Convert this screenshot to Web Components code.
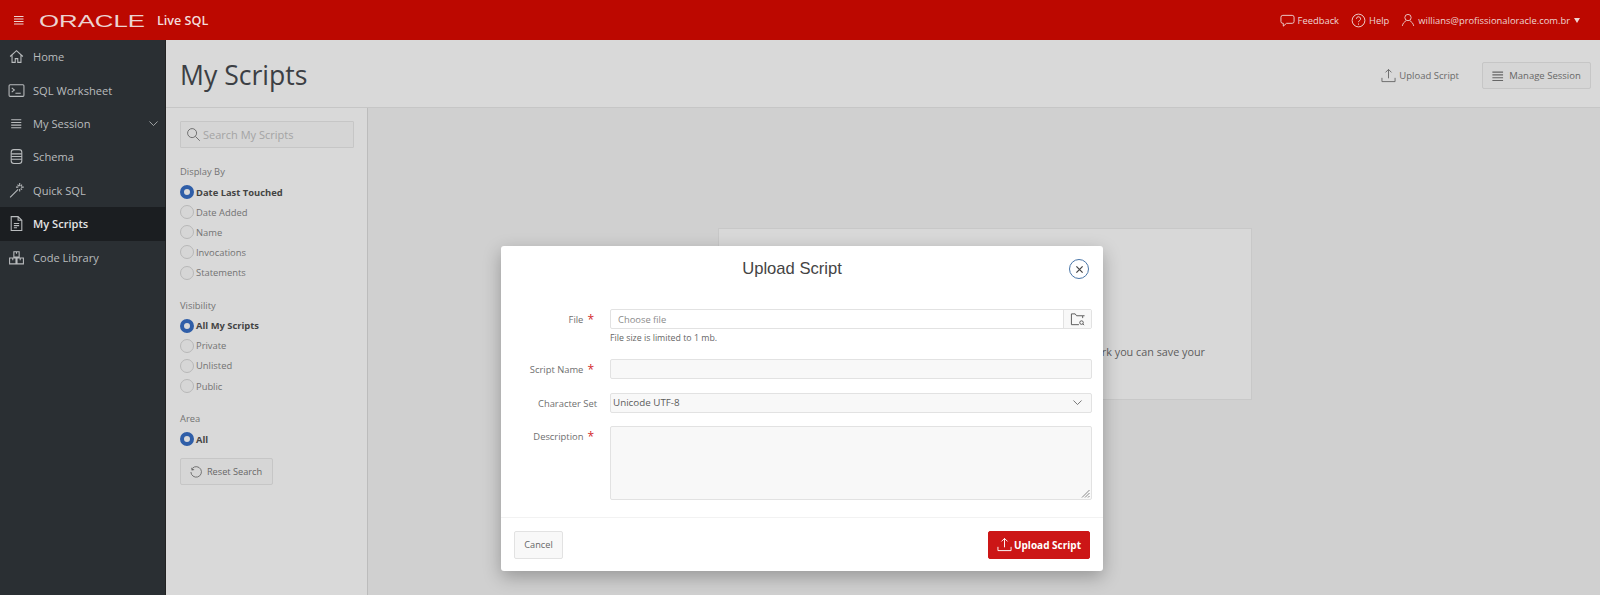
<!DOCTYPE html>
<html lang="en"><head><meta charset="utf-8"><title>My Scripts</title>
<style>
html,body{margin:0;padding:0;height:595px;overflow:hidden;background:#d0d0d0}
body{font-family:"Open Sans",sans-serif;font-size:11px;color:#555}
#root{display:flex;flex-direction:column;height:595px;position:relative}
#mid{display:flex;flex:1;min-height:0}
#work{flex:1;display:flex;flex-direction:column;min-width:0}
#below{flex:1;display:flex;min-height:0}
</style></head><body>
<div id="root">
  <app-header></app-header>
  <div id="mid">
    <side-nav>
      <nav-item icon="home">Home</nav-item>
      <nav-item icon="term">SQL Worksheet</nav-item>
      <nav-item icon="lines" chevron>My Session</nav-item>
      <nav-item icon="db">Schema</nav-item>
      <nav-item icon="wand">Quick SQL</nav-item>
      <nav-item icon="doc" active>My Scripts</nav-item>
      <nav-item icon="blocks">Code Library</nav-item>
    </side-nav>
    <div id="work">
      <title-band></title-band>
      <div id="below">
        <filter-panel></filter-panel>
        <empty-area></empty-area>
      </div>
    </div>
  </div>
  <upload-dialog></upload-dialog>
</div>
<script>
const ICONS={
home:'<path d="M2 8 8 2.500 14 8M3.800 6.500V13.500h3v-3.500h2.400v3.500h3V6.500"/>',
term:'<rect x="1" y="2.5" width="14" height="11" rx="1"/><path d="M3.5 5.5 6 7.5 3.5 9.5M7 10.5h5"/>',
lines:'<path d="M3 4.500h9.500M3 7h9.500M3 9.500h9.500M3 12h9.500"/>',
db:'<rect x="3" y="1.5" width="10" height="13" rx="2.5"/><path d="M3 5.5h10M3 8h10M3 10.5h10"/>',
wand:'<path d="M2 14.5 9.5 7M11 1v3M11 6.5v2.5M7.5 4.8h2.2M12.3 4.8h2.5M9 2.5l1.2 1.3M13.2 2.5 12 3.8M12 6l1.2 1.3"/>',
doc:'<path d="M3 1.5h6.5l3.5 3.5v9.5H3zM9.5 1.5V5H13M5.5 8h5M5.5 10h5M5.5 12h3"/>',
blocks:'<path d="M5.5 2.5h5v5h-5zM1.5 8.5h6v5.5h-6zM8.5 8.5h6v5.5h-6zM8 2.5v2M4.500 8.5v2M11.5 8.5v2"/>',
chev:'<path d="M3 5.5 8 10.5 13 5.5"/>',
search:'<circle cx="6.5" cy="6.5" r="4.8"/><path d="M10 10l4.7 4.7"/>',
reset:'<path d="M4 3.6A6 6 0 1 1 2.2 8"/><path d="M2.5 2.8 3 6.3 6.3 5.6z" fill="currentColor" stroke="none"/>',
upload:'<path d="M8 11V1.5M4.8 4.7 8 1.5l3.2 3.2M1 10.5v4h14v-4"/>',
chat:'<path d="M3 2.5h10a2 2 0 0 1 2 2v4.500a2 2 0 0 1-2 2H7l-3.500 3v-3H3a2 2 0 0 1-2-2V4.500a2 2 0 0 1 2-2z"/>',
help:'<circle cx="8" cy="8" r="6.8"/><path d="M5.800 6.200a2.200 2.200 0 1 1 3.300 1.900C8.300 8.600 8 9 8 9.800"/><path d="M8 11.200v1.300"/>',
user:'<circle cx="8" cy="5.200" r="3.600"/><path d="M1.500 14.800c.6-3 2.500-5 4.500-6M14.500 14.800c-.6-3-2.500-5-4.500-6"/>',
folder:'<path d="M13.500 6.500V4H7L5.500 2H1.500v11.500h8M13.500 4h2"/><circle cx="12.300" cy="11.300" r="1.900"/><path d="M13.700 12.700 15 14"/>',
x:'<path d="M3.500 3.500l9 9M12.500 3.500l-9 9"/>'
};
class IconGlyph extends HTMLElement{
  connectedCallback(){
    const s=this.getAttribute('size')||16,w=this.getAttribute('weight')||1;
    this.attachShadow({mode:'open'}).innerHTML=`<style>:host{display:inline-flex;flex:none;width:${s}px;height:${s}px}svg{display:block}</style>
    <svg width="${s}" height="${s}" viewBox="0 0 16 16" fill="none" stroke="currentColor" stroke-width="${w}">${ICONS[this.getAttribute('name')]}</svg>`;
  }
}
customElements.define('icon-glyph',IconGlyph);

class AppHeader extends HTMLElement{
  connectedCallback(){
    this.attachShadow({mode:'open'}).innerHTML=`<style>
    :host{display:flex;align-items:center;height:40px;flex:none;background:#bc0800;color:#eed5d3;padding:0 20px 0 11px;box-sizing:border-box;font:9.400px "Open Sans",sans-serif}
    svg.logo{display:block;margin-left:12px;overflow:visible}
    .app{margin-left:11px;font-size:12.600px;font-weight:600;color:#f3dcdb}
    .sp{flex:1}
    .lnk{display:flex;align-items:center;gap:3px;margin-left:12px}
    .caret{width:0;height:0;border:3.500px solid transparent;border-top:5px solid #eed5d3;border-bottom:0;margin-left:1px}
    </style>
    <icon-glyph name="lines" size="16"></icon-glyph>
    <svg class="logo" width="107" height="20" viewBox="0 0 107 20"><text x="0" y="16.500" font-family="Liberation Sans" font-size="17" textLength="106" lengthAdjust="spacingAndGlyphs" fill="#ecd3d1">ORACLE</text></svg>
    <span class="app">Live SQL</span><span class="sp"></span>
    <span class="lnk"><icon-glyph name="chat" size="15"></icon-glyph>Feedback</span>
    <span class="lnk"><icon-glyph name="help" size="15"></icon-glyph>Help</span>
    <span class="lnk"><icon-glyph name="user" size="14"></icon-glyph>willians@profissionaloracle.com.br<i class="caret"></i></span>`;
  }
}
customElements.define('app-header',AppHeader);

class SideNav extends HTMLElement{
  constructor(){super();this.attachShadow({mode:'open'}).innerHTML=`<style>:host{display:block;width:166px;flex:none;background:#2a2f33;box-shadow:inset -1px 0 0 #222}</style><slot></slot>`;}
}
customElements.define('side-nav',SideNav);

class NavItem extends HTMLElement{
  connectedCallback(){
    const a=this.hasAttribute('active');
    this.attachShadow({mode:'open'}).innerHTML=`<style>
    :host{display:flex;align-items:center;height:33.430px;box-sizing:border-box;padding:0 6px 0 8px;gap:8px;font:11.100px "Open Sans",sans-serif;color:${a?'#e4e4e4':'#b9bcbe'};font-weight:${a?600:400};background:${a?'#1b1e21':'transparent'}}
    span{flex:1}icon-glyph{color:#b9bcbe}
    </style><icon-glyph name="${this.getAttribute('icon')}" size="17"></icon-glyph><span><slot></slot></span>${this.hasAttribute('chevron')?'<icon-glyph name="chev" size="13"></icon-glyph>':''}`;
  }
}
customElements.define('nav-item',NavItem);

class TitleBand extends HTMLElement{
  connectedCallback(){
    this.attachShadow({mode:'open'}).innerHTML=`<style>
    :host{display:flex;align-items:center;height:68px;box-sizing:border-box;flex:none;background:#d9d9d9;border-bottom:1px solid #c6c6c6;padding:4px 9px 0 14px;font:9.500px "Open Sans",sans-serif;color:#6a6a6a}
    h1{margin:0;font-size:26.600px;font-weight:500;color:#3c3f44;flex:1;line-height:1}
    .up{display:flex;align-items:center;gap:3px;margin-right:23px}
    </style><h1>My Scripts</h1>
    <span class="up"><icon-glyph name="upload" size="15"></icon-glyph>Upload Script</span>
    <app-button icon="lines" isize="18" gap="2" w="109" style="padding-right:3px">Manage Session</app-button>`;
  }
}
customElements.define('title-band',TitleBand);

class AppButton extends HTMLElement{
  connectedCallback(){
    const hot=this.hasAttribute('hot'),w=this.getAttribute('w'),ic=this.getAttribute('icon');
    this.attachShadow({mode:'open'}).innerHTML=`<style>
    :host{display:inline-flex;align-items:center;justify-content:center;gap:${this.getAttribute('gap')||(hot?2:6)}px;box-sizing:border-box;width:${w}px;height:${this.getAttribute('h')||27}px;border-radius:2px;flex:none;font-family:"Open Sans",sans-serif;
    ${hot?'background:#cc1616;color:#fff;font-weight:700;border:1px solid #cc1616;':`background:${this.getAttribute('bg')||'#d6d6d6'};color:#666;border:1px solid ${this.getAttribute('bd')||'#c6c6c6'};`}}
    </style>${ic?`<icon-glyph name="${ic}" size="${this.getAttribute('isize')||14}"></icon-glyph>`:''}<slot></slot>`;
  }
}
customElements.define('app-button',AppButton);

class RadioOption extends HTMLElement{
  connectedCallback(){
    const c=this.hasAttribute('checked');
    this.attachShadow({mode:'open'}).innerHTML=`<style>
    :host{display:flex;align-items:center;height:20.130px;gap:2px;font:9.400px "Open Sans",sans-serif;color:${c?'#444':'#737373'};font-weight:${c?700:400}}
    i{width:14px;height:14px;box-sizing:border-box;border-radius:50%;flex:none;${c?'background:#d9d9d9;border:4px solid #2f5ea8;':'border:1px solid #b8b8b8;background:#d6d6d6;'}}
    </style><i></i><slot></slot>`;
  }
}
customElements.define('radio-option',RadioOption);

class RadioGroup extends HTMLElement{
  connectedCallback(){
    this.attachShadow({mode:'open'}).innerHTML=`<style>
    :host{display:block;margin-bottom:15px}
    div{font:9.400px/16px "Open Sans",sans-serif;color:#737373;height:16px;margin-bottom:2px}
    </style><div>${this.getAttribute('label')}</div><slot></slot>`;
  }
}
customElements.define('radio-group',RadioGroup);

class FilterPanel extends HTMLElement{
  connectedCallback(){
    this.attachShadow({mode:'open'}).innerHTML=`<style>
    :host{display:block;width:202px;flex:none;box-sizing:border-box;background:#d9d9d9;border-right:1px solid #bcbcbc;padding:13px 14px;font:11px "Open Sans",sans-serif}
    .s{display:flex;align-items:center;gap:2px;height:27px;box-sizing:border-box;width:174px;border:1px solid #c6c6c6;background:#d5d5d5;border-radius:1px;padding:0 5px;color:#a4a4a4;font-size:11px;margin-bottom:16px}
    .s icon-glyph{color:#6a6a6a}
    </style>
    <div class="s"><icon-glyph name="search" size="15"></icon-glyph>Search My Scripts</div>
    <radio-group label="Display By">
      <radio-option checked>Date Last Touched</radio-option><radio-option>Date Added</radio-option><radio-option>Name</radio-option><radio-option>Invocations</radio-option><radio-option>Statements</radio-option>
    </radio-group>
    <radio-group label="Visibility">
      <radio-option checked>All My Scripts</radio-option><radio-option>Private</radio-option><radio-option>Unlisted</radio-option><radio-option>Public</radio-option>
    </radio-group>
    <radio-group label="Area" style="margin-bottom:9px"><radio-option checked>All</radio-option></radio-group>
    <app-button icon="reset" gap="4" w="93" style="font-size:9.200px;padding-right:2px">Reset Search</app-button>`;
  }
}
customElements.define('filter-panel',FilterPanel);

class EmptyArea extends HTMLElement{
  connectedCallback(){
    this.attachShadow({mode:'open'}).innerHTML=`<style>
    :host{display:flex;flex:1;justify-content:center;align-items:flex-start;background:#d0d0d0;padding:120px 0 0 2px;box-sizing:border-box}
    .c{width:534px;height:172px;box-sizing:border-box;background:#d8d8d8;border:1px solid #c8c8c8;padding:114px 46px 0 0;text-align:right;font:10.800px/18px "Open Sans",sans-serif;color:#5c5c5c;white-space:nowrap}
    </style><div class="c">Once you have completed your work you can save your</div>`;
  }
}
customElements.define('empty-area',EmptyArea);

class FormField extends HTMLElement{
  connectedCallback(){
    const req=this.hasAttribute('required');
    this.attachShadow({mode:'open'}).innerHTML=`<style>
    :host{display:grid;grid-template-columns:109px 1fr;column-gap:0;font:9.400px "Open Sans",sans-serif;color:#6f6f6f}
    label{display:flex;justify-content:flex-end;align-items:center;height:20px;padding:1px ${req?16:13}px 0 0;gap:4px;box-sizing:border-box}
    b{color:#d3282c;font-weight:400;font-size:12px;line-height:1}
    </style><label>${this.getAttribute('label')}${req?'<b>*</b>':''}</label><div><slot></slot></div>`;
  }
}
customElements.define('form-field',FormField);

class UploadDialog extends HTMLElement{
  connectedCallback(){
    this.attachShadow({mode:'open'}).innerHTML=`<style>
    :host{position:absolute;left:501px;top:246px;width:602px;height:325px;box-sizing:border-box;display:flex;flex-direction:column;background:#fff;border-radius:3px;box-shadow:0 6px 18px rgba(0,0,0,.28);font:9.400px "Open Sans",sans-serif;color:#666}
    .t{display:flex;align-items:center;height:46px;flex:none;position:relative;justify-content:center;font:16.600px "Liberation Sans",Arial,sans-serif;color:#444;padding-right:20px;box-sizing:border-box}
    .x{position:absolute;right:14px;top:13px;width:20px;height:20px;box-sizing:border-box;border:1px solid #4a76a8;border-radius:50%;display:flex;align-items:center;justify-content:center;color:#444}
    .b{flex:1;display:flex;flex-direction:column;padding:17px 11px 0 0}
    .in{height:20px;box-sizing:border-box;border:1px solid #e2e2e2;border-radius:2px;background:#f8f8f8;display:flex;align-items:center}
    .file{background:#fff;color:#8c8c8c;padding-left:7px;justify-content:space-between;padding-right:0}
    .btn{width:28px;height:18px;box-sizing:border-box;border-left:1px solid #e2e2e2;background:#f8f8f8;display:flex;align-items:center;justify-content:center;color:#555}
    .h{font-size:8.800px;color:#666;line-height:13px;margin:3px 0 0;height:14px}
    .sel{padding:0 7px 0 2px;justify-content:space-between;color:#5c5c5c;font-size:9.800px}
    form-field{margin-bottom:13.500px}
    .ta{height:74px;align-items:flex-end;justify-content:flex-end;padding:0 1px 1px 0}
    .f{height:54px;flex:none;border-top:1px solid #f2f2f2;box-sizing:border-box;display:flex;align-items:center;justify-content:space-between;padding:0 13px}
    </style>
    <div class="t">Upload Script<span class="x"><icon-glyph name="x" size="11" weight="1.800"></icon-glyph></span></div>
    <div class="b">
      <form-field label="File" required style="margin-bottom:13px">
        <div class="in file">Choose file<span class="btn"><icon-glyph name="folder" size="15"></icon-glyph></span></div>
        <div class="h">File size is limited to 1 mb.</div>
      </form-field>
      <form-field label="Script Name" required><div class="in"></div></form-field>
      <form-field label="Character Set"><div class="in sel">Unicode UTF-8<icon-glyph name="chev" size="13"></icon-glyph></div></form-field>
      <form-field label="Description" required><div class="in ta"><svg width="9" height="9" viewBox="0 0 9 9" stroke="#888" fill="none"><path d="M1 8.500 8.500 1M4 8.500 8.500 4M7 8.500 8.500 7"/></svg></div></form-field>
    </div>
    <div class="f">
      <app-button w="49" h="28" bg="#f8f8f8" bd="#e2e2e2" style="font-size:9.200px">Cancel</app-button>
      <app-button hot icon="upload" isize="15" w="102" h="28" style="font-size:10px">Upload Script</app-button>
    </div>`;
  }
}
customElements.define('upload-dialog',UploadDialog);
</script>
</body></html>
